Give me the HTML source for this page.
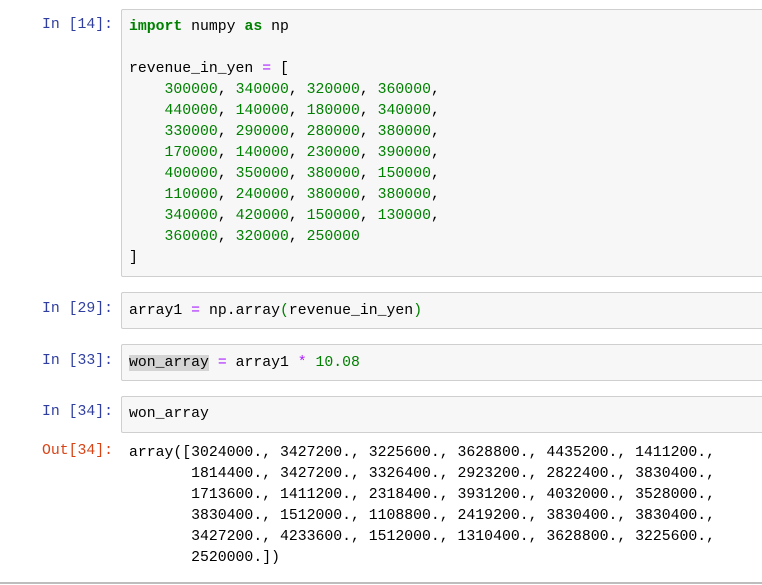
<!DOCTYPE html>
<html><head><meta charset="utf-8"><style>
body{margin:0;width:762px;height:585px;background:#fff;overflow:hidden;position:relative;font-family:"Liberation Mono","NanumGothic",monospace;font-size:14.8px;}
.p{position:absolute;right:649px;color:#303f9f;white-space:pre;}
.o{color:#d84315}
.box{position:absolute;left:121px;right:-5px;background:#f7f7f7;border:1px solid #cfcfcf;border-radius:2px;}
.l{position:absolute;left:129px;white-space:pre;color:#000;line-height:21px;}
.k{color:#008000;font-weight:bold}
.n{color:#008000}
.op{color:#aa22ff}
.hl{background:#d4d4d4}
</style></head><body>
<div class="p" style="top:17px">In [14]:</div>
<div class="box" style="top:9px;height:266px"></div>
<div class="l" style="top:17px"><span class="k">import</span> numpy <span class="k">as</span> np

revenue_in_yen <span class="op">=</span> [
    <span class="n">300000</span>, <span class="n">340000</span>, <span class="n">320000</span>, <span class="n">360000</span>,
    <span class="n">440000</span>, <span class="n">140000</span>, <span class="n">180000</span>, <span class="n">340000</span>,
    <span class="n">330000</span>, <span class="n">290000</span>, <span class="n">280000</span>, <span class="n">380000</span>,
    <span class="n">170000</span>, <span class="n">140000</span>, <span class="n">230000</span>, <span class="n">390000</span>,
    <span class="n">400000</span>, <span class="n">350000</span>, <span class="n">380000</span>, <span class="n">150000</span>,
    <span class="n">110000</span>, <span class="n">240000</span>, <span class="n">380000</span>, <span class="n">380000</span>,
    <span class="n">340000</span>, <span class="n">420000</span>, <span class="n">150000</span>, <span class="n">130000</span>,
    <span class="n">360000</span>, <span class="n">320000</span>, <span class="n">250000</span>
]</div>

<div class="p" style="top:301px">In [29]:</div>
<div class="box" style="top:292px;height:35px"></div>
<div class="l" style="top:301px">array1 <span class="op">=</span> np.array<span class="n">(</span>revenue_in_yen<span class="n">)</span></div>

<div class="p" style="top:353px">In [33]:</div>
<div class="box" style="top:344px;height:35px"></div>
<div class="l" style="top:353px"><span class="hl">won_array</span> <span class="op">=</span> array1 <span class="op">*</span> <span class="n">10.08</span></div>

<div class="p" style="top:404px">In [34]:</div>
<div class="box" style="top:396px;height:35px"></div>
<div class="l" style="top:404px">won_array</div>

<div class="p o" style="top:443px">Out[34]:</div>
<div class="l" style="top:443px">array([3024000., 3427200., 3225600., 3628800., 4435200., 1411200.,
       1814400., 3427200., 3326400., 2923200., 2822400., 3830400.,
       1713600., 1411200., 2318400., 3931200., 4032000., 3528000.,
       3830400., 1512000., 1108800., 2419200., 3830400., 3830400.,
       3427200., 4233600., 1512000., 1310400., 3628800., 3225600.,
       2520000.])</div>
<div style="position:absolute;left:0;right:0;top:582px;height:2px;background:#bdbdbd"></div>
</body></html>
